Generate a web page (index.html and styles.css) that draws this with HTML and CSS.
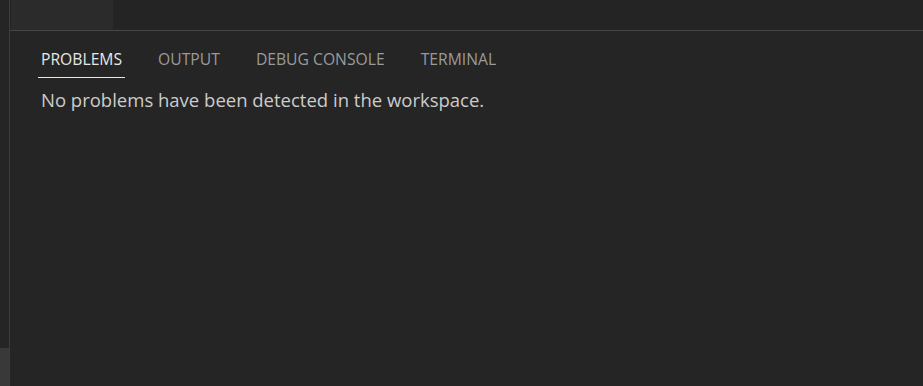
FILE: index.html
```html
<!DOCTYPE html>
<html>
<head>
<meta charset="utf-8">
<link rel="stylesheet" href="styles.css">
</head>
<body>
<div class="app">
  <div class="sidebar"><div class="thumb"></div></div>
  <div class="main">
    <div class="editor">
      <div class="tab-block"></div>
    </div>
    <div class="panel">
      <div class="tabs">
        <div class="tab active">PROBLEMS</div>
        <div class="tab">OUTPUT</div>
        <div class="tab">DEBUG CONSOLE</div>
        <div class="tab">TERMINAL</div>
      </div>
      <div class="message">No problems have been detected in the workspace.</div>
    </div>
  </div>
</div>
</body>
</html>
```
FILE: styles.css
```css
html, body {
  margin: 0;
  padding: 0;
  height: 100%;
  background: #252526;
  overflow: hidden;
}
.app {
  display: flex;
  height: 386px;
  font-family: "Open Sans", "Noto Sans", sans-serif;
}
.sidebar {
  width: 9px;
  border-right: 1px solid #3d3d3d;
  background: #252526;
  display: flex;
  flex-direction: column;
  justify-content: flex-end;
}
.thumb {
  height: 38px;
  background: #393939;
}
.main {
  flex: 1;
  display: flex;
  flex-direction: column;
}
.editor {
  height: 30px;
  padding-left: 1px;
  background: #242424;
  border-bottom: 1px solid #474747;
  display: flex;
}
.tab-block {
  width: 102px;
  background: #2b2b2b;
}
.panel {
  flex: 1;
  background: #252525;
  padding-left: 28px;
}
.tabs {
  display: flex;
  gap: 30px;
  height: 47px;
  align-items: flex-end;
}
.tab {
  font-size: 15.7px;
  color: #9a9a9a;
  padding: 0 3px 7px;
  line-height: 21px;
  border-bottom: 1px solid transparent;
}
.tab.active {
  color: #e7e7e7;
  border-bottom-color: #e7e7e7;
}
.message {
  margin-top: 9px;
  padding-left: 3px;
  font-size: 18.5px;
  line-height: 26px;
  color: #cccccc;
}
```
